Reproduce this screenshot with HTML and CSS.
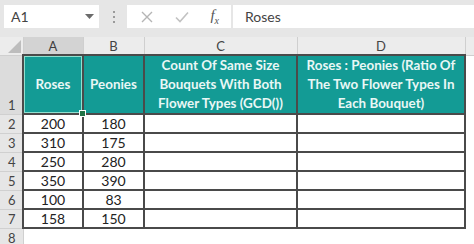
FILE: index.html
```html
<!DOCTYPE html>
<html lang="en">
<head>
    <meta charset="UTF-8">
    <title>Roses and Peonies</title>
    <link rel="stylesheet" href="styles.css">
</head>
<body>
    <div class="toolbar">
        <div class="name-box">
            <span>A1</span>
            <svg class="caret" width="9" height="5" viewBox="0 0 9 5"><path d="M0 0h9L4.5 5z" fill="#6b6b6b"/></svg>
        </div>
        <div class="dots"><i></i><i></i><i></i></div>
        <div class="fx-buttons">
            <svg width="12" height="12" viewBox="0 0 12 12"><path d="M1 1l10 10M11 1L1 11" stroke="#b5b5b5" stroke-width="1.4"/></svg>
            <svg width="14" height="12" viewBox="0 0 14 12"><path d="M1 6.5l4 4L13 1.5" stroke="#c2c2c2" stroke-width="1.6" fill="none"/></svg>
            <span class="fx"><i>f</i><sub>x</sub></span>
        </div>
        <div class="formula">Roses</div>
    </div>

    <table class="sheet">
        <colgroup>
            <col class="c-row"><col class="c-a"><col class="c-b"><col class="c-c"><col class="c-d"><col class="c-e">
        </colgroup>
        <tr class="col-heads">
            <th class="corner"><svg width="13" height="13" viewBox="0 0 13 13"><path d="M13 0v13H0z" fill="#bdbdbd"/></svg></th>
            <th class="picked">A</th><th>B</th><th>C</th><th>D</th><th class="edge"></th>
        </tr>
        <tr class="row-title">
            <th class="picked">1</th>
            <td class="active">Roses<span class="handle"></span></td>
            <td>Peonies</td>
            <td>Count Of Same Size Bouquets With Both Flower Types (GCD())</td>
            <td>Roses : Peonies (Ratio Of The Two Flower Types In Each Bouquet)</td>
            <td class="empty"></td>
        </tr>
        <tr><th>2</th><td>200</td><td>180</td><td></td><td></td><td class="empty"></td></tr>
        <tr><th>3</th><td>310</td><td>175</td><td></td><td></td><td class="empty"></td></tr>
        <tr><th>4</th><td>250</td><td>280</td><td></td><td></td><td class="empty"></td></tr>
        <tr><th>5</th><td>350</td><td>390</td><td></td><td></td><td class="empty"></td></tr>
        <tr><th>6</th><td>100</td><td>83</td><td></td><td></td><td class="empty"></td></tr>
        <tr><th>7</th><td>158</td><td>150</td><td></td><td></td><td class="empty"></td></tr>
        <tr class="blank"><th>8</th><td class="empty"></td><td class="empty"></td><td class="empty"></td><td class="empty"></td><td class="empty"></td></tr>
    </table>
</body>
</html>
```

FILE: styles.css
```css
/* hoja de calculo */
body {
    margin: 0;
    width: 474px;
    height: 244px;
    overflow: hidden;
    background-color: #ffffff;
    font-family: 'Lato', 'Open Sans', sans-serif;
    color: #333;
}

.toolbar {
    display: flex;
    align-items: center;
    height: 37px;
    padding: 0 0 0 4px;
    background-color: #e6e6e6;
    box-sizing: border-box;
}

.name-box {
    display: flex;
    align-items: center;
    justify-content: space-between;
    width: 95px;
    height: 23px;
    padding: 0 5px 0 7px;
    box-sizing: border-box;
    background-color: #ffffff;
    font-size: 14px;
    color: #444;
    margin-top: -4px;
}

.dots {
    display: flex;
    flex-direction: column;
    gap: 3px;
    margin: -4px 12px 0 14px;
}

.dots i {
    display: block;
    width: 2px;
    height: 2px;
    background-color: #9a9a9a;
}

.fx-buttons {
    display: flex;
    align-items: center;
    justify-content: space-between;
    width: 104px;
    height: 23px;
    padding: 0 12px 0 14px;
    box-sizing: border-box;
    background-color: #ffffff;
    margin-top: -4px;
}

.fx {
    font-family: 'Liberation Serif', serif;
    font-size: 15px;
    color: #555;
}

.fx sub {
    font-size: 10px;
    font-style: italic;
}

.formula {
    flex: 1;
    height: 23px;
    line-height: 23px;
    margin: -4px 0 0 2px;
    padding-left: 12px;
    background-color: #ffffff;
    font-size: 14px;
    color: #444;
}

.sheet {
    border-collapse: collapse;
    table-layout: fixed;
    width: 474px;
}

.c-row { width: 23px; }
.c-a { width: 60px; }
.c-b { width: 61px; }
.c-c { width: 153px; }
.c-d { width: 168px; }
.c-e { width: 9px; }

th {
    background-color: #e6e6e6;
    font-weight: normal;
    font-size: 13px;
    line-height: 16px;
    color: #444;
    padding: 0;
    border: 1px solid #d0d0d0;
}

.col-heads th {
    height: 17px;
    border-top: none;
    border-color: #cfcfcf;
    background-color: #ececec;
}

.col-heads th.picked {
    background-color: #d3d3d3;
    color: #3d3d3d;
}

.corner {
    text-align: right;
    vertical-align: bottom;
    line-height: 0;
}

.corner svg {
    margin: 0 2px 2px 0;
}

tr > th:first-child {
    text-align: left;
    padding-left: 8px;
    border-left: none;
}

.row-title th {
    vertical-align: bottom;
    background-color: #dcdcdc;
    padding-bottom: 1px;
}

td {
    height: 17px;
    padding: 0;
    font-size: 14px;
    line-height: 16px;
    text-align: center;
    border: 2px solid #4a4a4a;
    color: #222;
}

.row-title td {
    height: 55px;
    background-color: #139b95;
    color: #e9f7f5;
    font-weight: bold;
    font-size: 13.4px;
    line-height: 19px;
    padding: 0 2px;
}

.row-title td.active {
    position: relative;
    box-shadow: inset 0 0 0 1px #8fe0cf;
}

.handle {
    position: absolute;
    right: -4px;
    bottom: -4px;
    width: 5px;
    height: 5px;
    background-color: #217346;
    border: 1px solid #ffffff;
}

td.empty {
    border: none;
    background-color: #ffffff;
}

.row-title td.empty {
    background-color: #ffffff;
}

.edge {
    border-right: none;
}

.blank th {
    height: 18px;
}
```
